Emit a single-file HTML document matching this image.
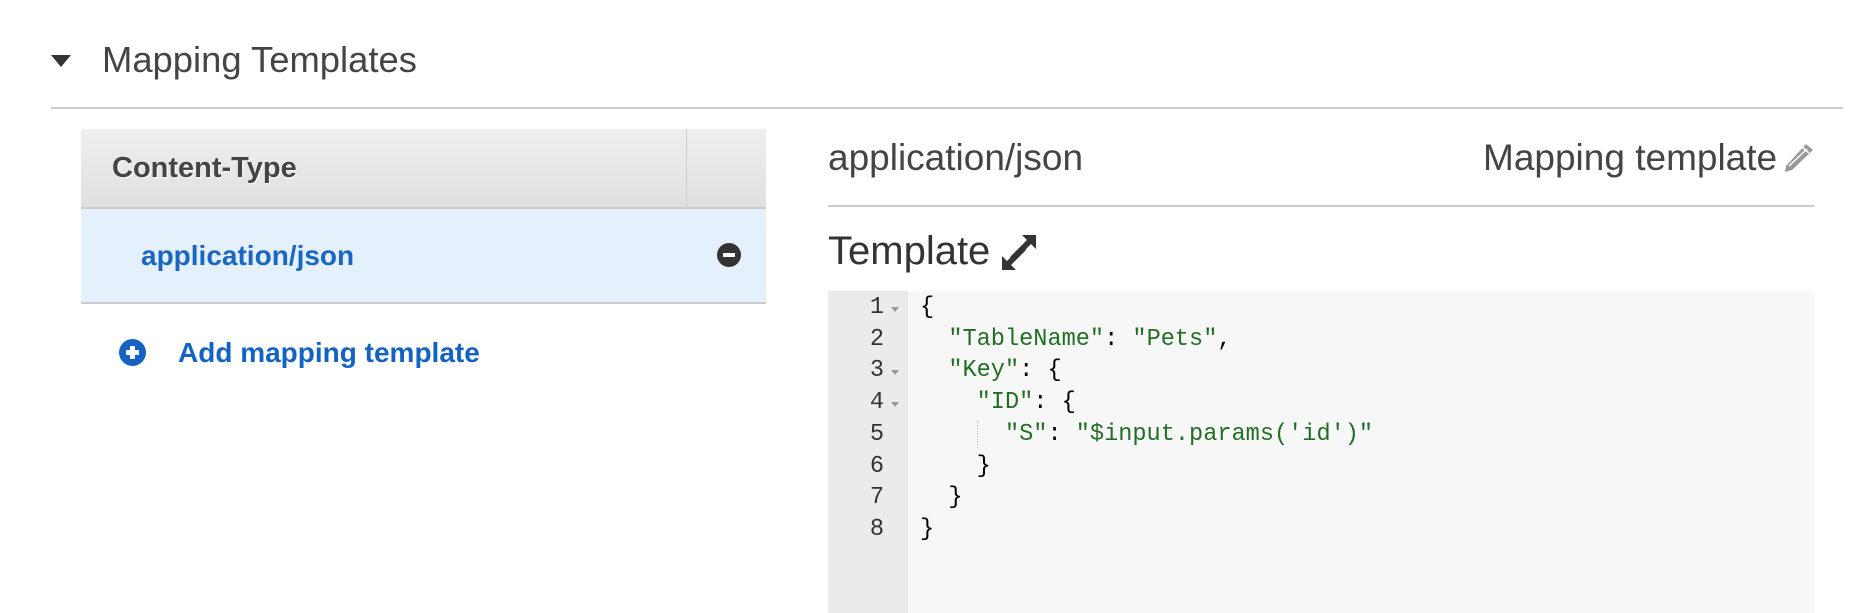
<!DOCTYPE html>
<html><head><meta charset="utf-8"><style>
body{margin:0;width:1873px;height:613px;background:#fff;position:relative;overflow:hidden;font-family:"Liberation Sans",Arial,sans-serif;}
.a{position:absolute;white-space:nowrap;}
.code{font-family:"Liberation Mono",monospace;font-size:23.6px;line-height:31.7px;}
.g{color:#236e25}
</style></head><body>
<div class="a" style="left:51px;top:55px;width:0;height:0;border-left:10px solid transparent;border-right:10px solid transparent;border-top:12px solid #333"></div>
<div class="a" style="left:102px;top:39px;font-size:36.4px;line-height:42px;color:#444">Mapping Templates</div>
<div class="a" style="left:51px;top:107px;width:1792px;height:2px;background:#ccc"></div>

<div class="a" style="left:81px;top:129px;width:685px;height:78px;background:linear-gradient(#efefef,#e0e0e0);border-bottom:2px solid #ccc"></div>
<div class="a" style="left:686px;top:129px;width:1px;height:78px;background:#ccc"></div>
<div class="a" style="left:112px;top:151px;font-size:29px;font-weight:bold;color:#444;line-height:34px;text-shadow:1px 1px 0 #fff">Content-Type</div>
<div class="a" style="left:81px;top:209px;width:685px;height:93px;background:#e4f0fc;border-bottom:2px solid #ccc"></div>
<div class="a" style="left:141px;top:239px;font-size:28px;font-weight:bold;color:#1a66c2;line-height:34px">application/json</div>
<div class="a" style="left:717px;top:243px;width:24px;height:24px;border-radius:50%;background:#333"><div style="position:absolute;left:6px;top:10px;width:12px;height:4px;background:#fff"></div></div>
<div class="a" style="left:119px;top:339px;width:27px;height:27px;border-radius:50%;background:#1463c3"><div style="position:absolute;left:7px;top:11px;width:13px;height:5px;background:#fff"></div><div style="position:absolute;left:11px;top:7px;width:5px;height:13px;background:#fff"></div></div>
<div class="a" style="left:178px;top:336px;font-size:28px;font-weight:bold;color:#1463c3;line-height:34px">Add mapping template</div>

<div class="a" style="left:828px;top:137px;font-size:37px;line-height:42px;color:#444">application/json</div>
<div class="a" style="left:1483px;top:137px;font-size:37px;line-height:42px;color:#444">Mapping template</div>
<svg class="a" style="left:1782px;top:143px" width="32" height="31" viewBox="0 0 32 31"><path d="M24 1 L31 7 L10 27 L3 29 L4 23 Z" fill="#999"/><path d="M7 23 L25 6" stroke="#fff" stroke-width="1.5"/><path d="M20 4 L27 10" stroke="#fff" stroke-width="1.5"/></svg>
<div class="a" style="left:828px;top:205px;width:986px;height:2px;background:#ccc"></div>
<div class="a" style="left:828px;top:228px;font-size:40px;line-height:46px;color:#333">Template</div>
<svg class="a" style="left:1002px;top:235px" width="34" height="35" viewBox="0 0 34 35"><path d="M20 0 L34 0 L34 14 L29 9 L12 26 L8 22 L25 5 Z" fill="#333"/><path d="M0 35 L0 21 L5 26 L20 11 L24 15 L9 30 L14 35 Z" fill="#333"/></svg>

<div class="a" style="left:828px;top:291px;width:986px;height:322px;background:#f7f7f7"></div>
<div class="a" style="left:828px;top:291px;width:80px;height:322px;background:#ebebeb"></div>
<div class="a code" style="left:828px;top:292px;width:56px;text-align:right;color:#333">1<br>2<br>3<br>4<br>5<br>6<br>7<br>8</div>
<div class="a" style="left:891px;top:307px;border-left:4px solid transparent;border-right:4px solid transparent;border-top:5px solid #999"></div>
<div class="a" style="left:891px;top:370px;border-left:4px solid transparent;border-right:4px solid transparent;border-top:5px solid #999"></div>
<div class="a" style="left:891px;top:402px;border-left:4px solid transparent;border-right:4px solid transparent;border-top:5px solid #999"></div>
<div class="a" style="left:977px;top:420px;height:30px;border-left:1px dotted #ccc"></div>
<pre class="a code" style="left:920px;top:292px;margin:0;color:#000;white-space:pre">{
  <span class="g">"TableName"</span>: <span class="g">"Pets"</span>,
  <span class="g">"Key"</span>: {
    <span class="g">"ID"</span>: {
      <span class="g">"S"</span>: <span class="g">"$input.params('id')"</span>
    }
  }
}</pre>
</body></html>
